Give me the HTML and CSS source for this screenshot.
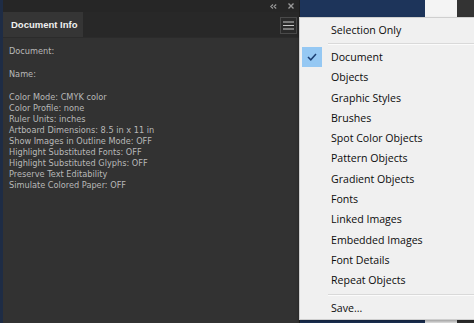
FILE: index.html
```html
<!DOCTYPE html>
<html>
<head>
<meta charset="utf-8">
<link rel="stylesheet" href="styles.css">
</head>
<body>
<div class="app">
  <div class="edge"></div>
  <div class="panel">
    <div class="topbar">
      <svg class="ico" width="7" height="5" viewBox="0 0 7 5"><path d="M3 0.5 L0.8 2.5 L3 4.5 M6.2 0.5 L4 2.5 L6.2 4.5" fill="none" stroke="#9a9a9a" stroke-width="1.1"/></svg>
      <svg class="ico x" width="6" height="6" viewBox="0 0 6 6"><path d="M0.5 0.5 L5.5 5.5 M5.5 0.5 L0.5 5.5" stroke="#9a9a9a" stroke-width="1.4"/></svg>
    </div>
    <div class="tabbar">
      <div class="tab">Document Info</div>
      <div class="burger">
        <svg width="11" height="9" viewBox="0 0 11 9"><path d="M0 1 H11 M0 4.5 H11 M0 8 H11" stroke="#c8c8c8" stroke-width="1.2"/></svg>
      </div>
    </div>
    <div class="body">
      <p class="line">Document:</p>
      <p class="line gap">Name:</p>
      <p class="line gap">Color Mode: CMYK color</p>
      <p class="line">Color Profile: none</p>
      <p class="line">Ruler Units: inches</p>
      <p class="line">Artboard Dimensions: 8.5 in x 11 in</p>
      <p class="line">Show Images in Outline Mode: OFF</p>
      <p class="line">Highlight Substituted Fonts: OFF</p>
      <p class="line">Highlight Substituted Glyphs: OFF</p>
      <p class="line">Preserve Text Editability</p>
      <p class="line">Simulate Colored Paper: OFF</p>
    </div>
  </div>
  <div class="blue"></div>
  <div class="white"></div>
  <div class="dark"></div>
</div>
<div class="menu">
  <div class="item first">Selection Only</div>
  <div class="sep"></div>
  <div class="item checked"><span class="check"><svg width="10" height="8" viewBox="0 0 10 8"><path d="M1 4 L3.8 6.8 L9 1" fill="none" stroke="#1c3f73" stroke-width="1.5"/></svg></span>Document</div>
  <div class="item">Objects</div>
  <div class="item">Graphic Styles</div>
  <div class="item">Brushes</div>
  <div class="item">Spot Color Objects</div>
  <div class="item">Pattern Objects</div>
  <div class="item">Gradient Objects</div>
  <div class="item">Fonts</div>
  <div class="item">Linked Images</div>
  <div class="item">Embedded Images</div>
  <div class="item">Font Details</div>
  <div class="item">Repeat Objects</div>
  <div class="sep"></div>
  <div class="item">Save...</div>
</div>
</body>
</html>
```
FILE: styles.css
```css
html, body {
  margin: 0;
  padding: 0;
  width: 474px;
  height: 323px;
  overflow: hidden;
  background: #333333;
}
.app {
  display: flex;
  height: 323px;
}
.edge {
  width: 3px;
  background: #1e2c45;
}
.panel {
  width: 297px;
  display: flex;
  flex-direction: column;
  background: #323232;
  border-right: 1px solid #1e1e1e;
  box-sizing: border-box;
}
.topbar {
  height: 12px;
  background: #262626;
  display: flex;
  justify-content: flex-end;
  align-items: center;
  gap: 11px;
  padding-right: 5px;
}
.ico { display: block; }
.tabbar {
  height: 25px;
  background: #282828;
  border-bottom: 1px solid #2b2b2b;
  display: flex;
  align-items: stretch;
  justify-content: space-between;
}
.tab {
  width: 80px;
  background: #353535;
  color: #f0f0f0;
  font-family: "Liberation Sans", sans-serif;
  font-weight: bold;
  font-size: 9.5px;
  line-height: 25px;
  padding-left: 8px;
  box-sizing: border-box;
  white-space: nowrap;
}
.burger {
  width: 15px;
  height: 15px;
  margin: 5px 2px 0 0;
  border: 1px solid #4a4a4a;
  background: #2a2a2a;
  display: flex;
  align-items: center;
  justify-content: center;
}
.burger svg { display: block; }
.body {
  flex: 1;
  padding: 8px 0 0 6px;
  font-family: "DejaVu Sans", sans-serif;
  font-size: 8.2px;
  color: #b8b8b8;
}
.line {
  margin: 0;
  line-height: 11px;
  white-space: nowrap;
}
.line.gap { margin-top: 12px; }
.blue {
  width: 125px;
  background: #1d345a;
}
.white {
  width: 32px;
  background: #f4f4f4;
}
.dark {
  flex: 1;
  background: #333333;
}
.menu {
  position: absolute;
  left: 299px;
  top: 17px;
  width: 185px;
  height: 303px;
  background: #f0f0f0;
  border: 1px solid #cfcfcf;
  box-sizing: border-box;
  box-shadow: 0 2px 3px rgba(0,0,0,0.35);
  padding-top: 2px;
  font-family: "Open Sans", sans-serif;
  font-size: 10.6px;
  color: #0c0c0c;
}
.item {
  height: 20.3px;
  line-height: 20.3px;
  padding-left: 31px;
  position: relative;
  white-space: nowrap;
}
.item.first { height: 20px; line-height: 20px; }
.sep {
  height: 1px;
  margin: 3px 0 2px 28px;
  background: #d9d9d9;
  border-bottom: 1px solid #fbfbfb;
}
.check {
  position: absolute;
  left: 2px;
  top: 0;
  width: 20px;
  height: 20px;
  background: #95c8f3;
  display: flex;
  align-items: center;
  justify-content: center;
}
.check svg { display: block; }
```
